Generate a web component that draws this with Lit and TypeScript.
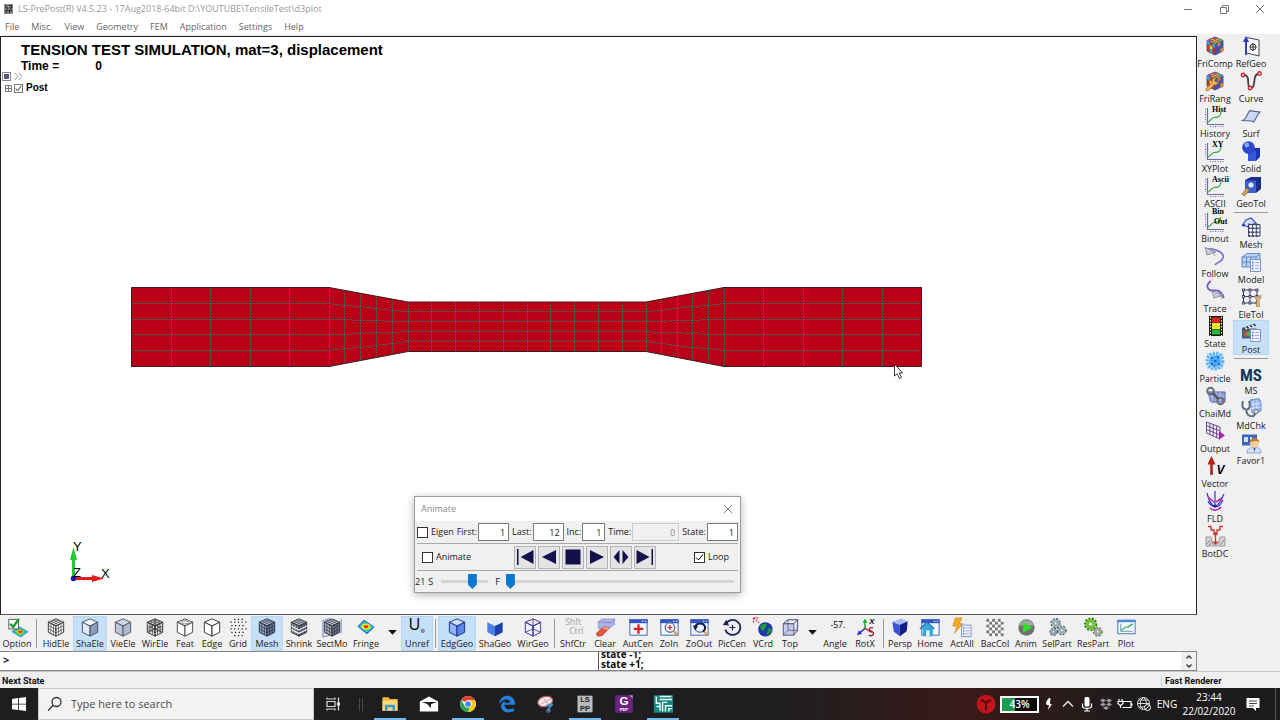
import { LitElement, html, svg, css, SVGTemplateResult, TemplateResult } from "lit";
import { customElement, property } from "lit/decorators.js";

type Pt = [number, number];
const mix = (a: Pt, b: Pt, t: number): Pt => [a[0] + (b[0] - a[0]) * t, a[1] + (b[1] - a[1]) * t];
const pts = (list: Pt[]) => list.map((p) => p.join(",")).join(" ");
const seg = (a: Pt, b: Pt) => `M${a[0]} ${a[1]}L${b[0]} ${b[1]}`;

/* Corners of the isometric cube used by most of the element icons. */
const T: Pt = [12, 3], L: Pt = [4, 6.5], R: Pt = [20, 6.5], C: Pt = [12, 10.5];
const LB: Pt = [4, 17], RB: Pt = [20, 17], B: Pt = [12, 21], K: Pt = [12, 13.5];

function ruled(face: Pt[], n: number): string {
  let d = "";
  for (let i = 1; i < n; i++) {
    const t = i / n;
    d += seg(mix(face[0], face[1], t), mix(face[3], face[2], t));
    d += seg(mix(face[0], face[3], t), mix(face[1], face[2], t));
  }
  return d;
}

function cube(top: string, left: string, right: string, line: string, n = 1, back = false): SVGTemplateResult {
  const faces: Pt[][] = [[T, R, C, L], [L, C, B, LB], [C, R, RB, B]];
  const fills = [top, left, right];
  return svg`
    ${faces.map((f, i) => svg`<polygon points=${pts(f)} fill=${fills[i]} stroke=${line} stroke-width=".9" stroke-linejoin="round"></polygon>`)}
    ${n > 1 ? svg`<path d=${faces.map((f) => ruled(f, n)).join("")} stroke=${line} stroke-width=".6" fill="none"></path>` : ""}
    ${back ? svg`<path d=${seg(T, K) + seg(K, LB) + seg(K, RB)} stroke=${line} stroke-width=".8" fill="none"></path>` : ""}`;
}

const plotIcon = (a: string, b = ""): SVGTemplateResult => svg`
  <path d="M4.500 4V20.500H21" fill="none" stroke="#6a6ab0" stroke-width="1.200"></path>
  <path d="M2.500 5v13M7 22.500h14" stroke="#6a6ab0" stroke-width="1" stroke-dasharray="1 1.500"></path>
  <path d="M5 18C8 17 8 14 11 13.500S17 14 18 8" fill="none" stroke="#27a844" stroke-width="1.200"></path>
  <text x="9" y=${b ? 5 : 7.5} class="glyph">${a}</text>
  ${b ? svg`<text x="11" y="15" class="glyph">${b}</text>` : ""}`;

const rubik = svg`
  ${cube("#f4c21f", "#d8362a", "#3a59d9", "#50505c", 3)}
  <path d="M4 6.500L6.700 7.800V11.300L4 10zM9.300 9.200L12 10.500V14L9.300 12.700zM6.700 14.800L9.300 16.100V19.600L6.700 18.300z" fill="#3aa5df"></path>
  <path d="M6.700 11.300L9.300 12.600V16.100L6.700 14.800z" fill="#f0d02e"></path>
  <path d="M14.700 9.200L17.300 7.800V11.300L14.700 12.700zM17.300 14.800L20 13.500V17L17.300 18.300z" fill="#ef7d22"></path>
  <path d="M12 14L14.700 12.700V16.200L12 17.500z" fill="#6040a0"></path>
  <path d="M12 3L14.700 4.200L12 5.500L9.300 4.200zM6.700 5.300L9.300 6.600L6.700 7.800L4 6.500z" fill="#b33bc0"></path>
  <path d="M17.300 5.300L20 6.500L17.300 7.800L14.700 6.600z" fill="#35b2a4"></path>`;

const wrench = svg`<path d="M3 19.500L9.500 13.500C8.500 10.500 11 8.500 13 9.200L11.500 11.500L13 13.300L15.500 12.300C15.500 15 13 16.500 11.200 15.800L5.500 21.500C4 22.500 2 21 3 19.500z" fill="#f2b65c" stroke="#a0661c" stroke-width=".8"></path>`;

const windowFrame = svg`
  <rect x="3.500" y="4" width="18" height="16" fill="#f4f7ff" stroke="#3f62b8"></rect>
  <rect x="3" y="3.500" width="19" height="4" fill="#2f56c4"></rect>
  <path d="M16 5.500h1.500M19 5.500h1.500" stroke="#fff" stroke-width="1.200"></path>`;

const gear = (x: number, y: number, r: number, color: string, edge: string): SVGTemplateResult => svg`
  <circle cx=${x} cy=${y} r=${r} fill="none" stroke=${edge} stroke-width=${r * 0.55} stroke-dasharray="2 1.300"></circle>
  <circle cx=${x} cy=${y} r=${r * 0.7} fill="none" stroke=${color} stroke-width=${r * 0.6}></circle>
  <circle cx=${x} cy=${y} r=${r * 0.35} fill="#fff" stroke=${edge} stroke-width=".5"></circle>`;

const notes = svg`
  <path d="M11.500 9.500h10v12h-10z" fill="#eef2ff" stroke="#7f8fd4"></path>
  <path d="M13 12.500h1.500M13 15.500h1.500M13 18.500h1.500" stroke="#5567c0" stroke-width="1.500"></path>
  <path d="M16 12.500h4M16 15.500h4M16 18.500h4" stroke="#9dabe8" stroke-width="1"></path>`;

const lens = svg`
  <circle cx="13" cy="12" r="5" fill="#eaf1ff" stroke="#6a7896" stroke-width="1.400"></circle>
  <path d="M17 15.500L20.500 20" stroke="#d79a3c" stroke-width="2.400"></path>`;

const ICONS: Record<string, SVGTemplateResult> = {
  Option: svg`
    <path d="M6 16.500L14 10.500L24 16.500L16 22.500z" fill="#2b9df0"></path><path d="M8.500 16.500L14.300 12.300L21.500 16.500L16 20.800z" fill="#43d84b"></path>
    <path d="M11 16.500L15 14L19.500 16.500L15.500 19.300z" fill="#f7e22c"></path><ellipse cx="15.500" cy="16.500" rx="2.600" ry="1.500" fill="#ef3322"></ellipse>
    <rect x="3.500" y="3.500" width="10" height="10" fill="#fff" stroke="#555"></rect>
    <path d="M5 8L8 11.500L14 3" fill="none" stroke="#159d2c" stroke-width="2.400"></path>`,
  HidEle: cube("#fff", "#fff", "#fff", "#222", 3),
  ShaEle: cube("#f2f6fd", "#dfe8f5", "#8c9cb8", "#3b4558"),
  VieEle: cube("#cfd6e6", "#bcc5d9", "#b0bad1", "#444a5a"),
  WirEle: svg`${cube("none", "none", "none", "#222", 3, true)}<path d="M4 13L12 9.500L20 13M8 5V15.500M16 5V15.500" stroke="#444" stroke-width=".6" fill="none"></path>`,
  Feat: svg`${cube("#fff", "#fff", "#fff", "#333")}<ellipse cx="12" cy="6.700" rx="4" ry="1.600" fill="none" stroke="#555" stroke-width=".8"></ellipse>`,
  Edge: cube("#fff", "#fff", "#fff", "#222"),
  Grid: svg`<path d="M4 6.500h17M5 10h15M4 13.500h17M5 17h15M8 3.500h10M8 20.500h9" stroke="#222" stroke-width="1.300" stroke-dasharray="1.300 2.600"></path>`,
  Mesh: cube("#c4cddd", "#96a3be", "#6b7896", "#1d2433", 3),
  Shrink: svg`${cube("#d2d6df", "#9a9fad", "#6b7080", "#23262e", 3)}<path d="M4 10.500L12 14.500L20 10.500M4 14L12 18L20 14" stroke="#fff" stroke-width="1.200" fill="none"></path>`,
  SectMo: svg`${cube("#d9dde6", "#aeb4c2", "#727a8c", "#22252d", 3)}<path d="M2.500 5V22M2.500 5L10 2.500M21.500 3V18M2.500 22L10 20" stroke="#6b7fc2" fill="none"></path>`,
  Fringe: svg`<path d="M3 11L10 4L21 11.500L13 19z" fill="#2d54e0"></path><path d="M4.500 11L10.300 5.200L19.500 11.500L13 17.500z" fill="#33cfd8"></path>
    <path d="M6 11L10.500 6.500L18 11.500L13 16z" fill="#3fdc3a"></path><ellipse cx="12" cy="11" rx="4.500" ry="3" fill="#f6ee2a"></ellipse><ellipse cx="12" cy="11" rx="2.600" ry="1.700" fill="#ec2a1c"></ellipse>`,
  Unref: svg`<text x="3" y="15" class="letter">U</text><circle cx="18" cy="15.500" r="1.800" fill="#bbb" stroke="#777"></circle><circle cx="18" cy="15.500" r=".7" fill="#333"></circle>`,
  EdgGeo: cube("#cfe0fd", "#8fb4f6", "#5a86e6", "#14207a"),
  ShaGeo: svg`<polygon points="12,3 20,6.500 12,10.500 4,6.500" fill="#e6eefc"></polygon><polygon points="4,6.500 12,10.500 12,21 4,17" fill="#4d7fe8"></polygon><polygon points="20,6.500 12,10.500 12,21 20,17" fill="#1d3fa8"></polygon>`,
  WirGeo: cube("none", "none", "none", "#2b2790", 1, true),
  ShfCtr: svg`<text x="4" y="9" class="ghost">Shft</text><text x="8" y="19" class="ghost">Ctrl</text>`,
  Clear: svg`<path d="M5 6L9 3H22L19 7H5zM5 6V13L11 16L22 9V3L19 7z" fill="#a9b4ea" stroke="#7681c6" stroke-width=".6"></path>
    <path d="M3 18L11 11L17 12L9 20.500L4 21z" fill="#e4573f" stroke="#a4331f" stroke-width=".7"></path><path d="M11 11L17 12L14.500 14.700L9 13z" fill="#f49a86"></path>`,
  AutCen: svg`${windowFrame}<path d="M12.500 8.500V18.500M7.500 13.500H17.500" stroke="#dd1d24" stroke-width="2.400"></path>`,
  ZoIn: svg`${windowFrame}${lens}<path d="M13 9.500V14.500M10.500 12H15.500" stroke="#dd1d24" stroke-width="1.300"></path>`,
  ZoOut: svg`${windowFrame}${lens}<path d="M8 12C9 7 17 6 18.500 12C18.500 14 17.500 15.500 16 16.500" fill="none" stroke="#111a48" stroke-width="2"></path><path d="M5.500 10L11 10.500L8 15z" fill="#111a48"></path>`,
  PicCen: svg`<path d="M5.500 8.500A8 7.800 0 1 1 5 14" fill="none" stroke="#20245c" stroke-width="1.800"></path><path d="M2.500 9.500L9 10L6 4z" fill="#20245c"></path><path d="M12.500 9V15M9.500 12H15.500" stroke="#20245c" stroke-width="1.200"></path>`,
  VCrd: svg`<circle cx="14.500" cy="14" r="7.500" fill="#1f36a8"></circle><path d="M9 11C11 8 14 7 16 8.500C15 10 16 12 13.500 13C14 15 11 16 10 14zM17 14C19 12 21 13 21 15C20 18 18 19 16 20C15 18 17 17 17 14z" fill="#1f9a38"></path>
    <path d="M2 2L9 8M2 2V8M2 2H7" stroke="#dc3a48" stroke-width="1.200" stroke-dasharray="2 1"></path>`,
  Top: svg`<path d="M5 8H16V20H5zM5 8L10 4H20L16 8M20 4V15L16 20" fill="#c9ccea" stroke="#44466a" stroke-width=".9"></path><path d="M5 8L10 4H20L16 8z" fill="#f2f3fb" stroke="#44466a" stroke-width=".9"></path><path d="M10 4V15H20M10 15L5 20" stroke="#44466a" stroke-width=".7" fill="none"></path>`,
  Angle: svg`<text x="15" y="13" class="angle">-57.</text>`,
  RotX: svg`<path d="M12 13V5" stroke="#1fa834" stroke-width="1.600"></path><path d="M9.500 7L12 2.500L14.500 7z" fill="#1fa834"></path><path d="M12 13L6 18" stroke="#2136c4" stroke-width="1.600"></path><path d="M3.500 20L5.500 15L9 18.500z" fill="#2136c4"></path>
    <path d="M12 13L19 17" stroke="#c9202c" stroke-width="1.600"></path><path d="M20.500 12.500C16 11 15 15 19 16C23 18 20 22 16 20" fill="none" stroke="#7d1720" stroke-width="1.300"></path><text x="16.500" y="8.500" class="axis">X</text>`,
  Persp: svg`<polygon points="4,6 13,2.500 20,5.500 11.500,9.500" fill="#a9bcf4"></polygon><polygon points="4,6 11.500,9.500 12,21 5.500,16.500" fill="#3c55d8"></polygon><polygon points="20,5.500 11.500,9.500 12,21 19,16" fill="#141f86"></polygon>`,
  Home: svg`${windowFrame}<path d="M3 13L9 7.500L15 13V21H4.500V13z" fill="#35a8dc"></path><path d="M1.500 13.500L9 6.500L16.500 13.500" fill="none" stroke="#1578b4" stroke-width="1.600"></path><rect x="8" y="15" width="3.500" height="6" fill="#e9f7ff"></rect>`,
  ActAll: svg`<path d="M5 2H12L9 8H13L4 18L7 10.500H2.500z" fill="#f6a91e" stroke="#c77b10" stroke-width=".6"></path>${notes}`,
  BacCol: svg`<rect x="3" y="3" width="18" height="18" fill="#fff"></rect>${[0, 1, 2, 3, 4, 5].map((r) => [0, 1, 2].map((c) => svg`<rect x=${3 + c * 6 + (r % 2) * 3} y=${3 + r * 3} width="3" height="3" fill="#777"></rect>`))}`,
  Anim: svg`<circle cx="12.500" cy="12" r="8.500" fill="#6c706f"></circle><path d="M4.500 10A8.500 8.500 0 0 1 20.500 10z" fill="#a2a6a5"></path><path d="M9 6.500L18.500 12L9 17.500z" fill="#2fe02a"></path>`,
  SelPart: svg`${gear(10.5, 7.5, 4.2, "#9db0b8", "#46555c")}${gear(17, 15, 4, "#9db0b8", "#46555c")}${gear(8.5, 16.5, 3.5, "#8ea3ac", "#46555c")}`,
  ResPart: svg`${gear(9.5, 8.5, 5.5, "#6cc22e", "#2d7a12")}${gear(17, 16.5, 4, "#9fb09a", "#4f6349")}`,
  Plot: svg`<rect x="3.500" y="4.500" width="18" height="14" fill="#f4fbff" stroke="#3a78c0"></rect><rect x="3" y="4" width="19" height="2.500" fill="#4c8ad2"></rect><path d="M6.500 8V16H19" stroke="#6786a8" stroke-width=".9" fill="none"></path><path d="M7 15C10 14 10 11 13 11.500S16 9 19 8.500" stroke="#21a049" stroke-width="1.200" fill="none"></path>`,

  FriComp: rubik,
  FriRang: svg`${rubik}${wrench}`,
  History: plotIcon("Hist"),
  XYPlot: plotIcon("XY"),
  ASCII: plotIcon("Ascii"),
  Binout: plotIcon("Bin", "Out"),
  Follow: svg`<path d="M4 5C10 4 22 8 20 14C19 18 14 18 12 21" fill="none" stroke="#8c74d4" stroke-width="1.800"></path><path d="M2 3.500L13 8L4 11zM8 4L12 12" fill="#c8ccd6" stroke="#7c8494" stroke-width=".8"></path>`,
  Trace: svg`<path d="M8 2C2 6 4 12 11 11.500S18 14 21 19" fill="none" stroke="#7258c4" stroke-width="1.800"></path><path d="M9 12L21 16L11 19zM15 12L19 20" fill="#c8ccd6" stroke="#7c8494" stroke-width=".8"></path>`,
  State: svg`<rect x="6" y="2" width="14" height="20" fill="#1c1a10"></rect><rect x="9" y="3.500" width="8" height="5" fill="#e5241d"></rect><rect x="9" y="9" width="8" height="6" fill="#f4e62a"></rect><rect x="9" y="15.500" width="8" height="5" fill="#23c136"></rect><path d="M7.500 3V22M18.500 3V22" stroke="#e9e3a8" stroke-width="1.200" stroke-dasharray="1.500 1.500"></path>`,
  Particle: svg`<rect x="4" y="4" width="16" height="16" fill="#bfe0fa"></rect><circle cx="12" cy="12" r="5.500" fill="#49a8ee"></circle><circle cx="12" cy="12" r="7.500" fill="none" stroke="#58b4f4" stroke-width="4" stroke-dasharray="2 1.300"></circle><path d="M8 9h1.500M14 8h2M11 12h2.500M15 15h2M8 15h2M11 17h1" stroke="#1a5ee0" stroke-width="1.800"></path>`,
  ChaiMd: svg`<path d="M5 8H22V18H8z" fill="#8d9ed8" stroke="#4f5f9a"></path><path d="M9 8V18M13 8V18M17 8V18M5 13H22" stroke="#c3ccf0" stroke-width=".8"></path><circle cx="7.500" cy="7" r="3.300" fill="none" stroke="#6a6f7c" stroke-width="2"></circle><circle cx="17.500" cy="17" r="3.300" fill="none" stroke="#6a6f7c" stroke-width="2"></circle><path d="M9.500 9L15.500 15" stroke="#555a66" stroke-width="2.600"></path>`,
  Output: svg`<path d="M3.500 3L17 8V20L3.500 14zM3.500 6.700L17 12M3.500 10.400L17 16M6.900 4.200V15.600M10.200 5.500V17.200M13.600 6.800V18.700" fill="none" stroke="#6a4a94" stroke-width="1"></path><path d="M16 12L22 16.500L16 20.500z" fill="#b01cb0"></path>`,
  Vector: svg`<path d="M8.500 21V9" stroke="#b3241e" stroke-width="2.600"></path><path d="M4.500 10.500L8.500 2L12.500 10.500z" fill="#b3241e"></path><text x="13.500" y="20" class="vee">V</text>`,
  FLD: svg`<path d="M4 4C6 12 9 17 12 17S18 12 21 5M5 12C8 18 15 22 20 11M12 2V18" fill="none" stroke="#3434c4" stroke-width="1.200"></path><path d="M5 8L11 13M19 9L13 13M7 19C10 22 15 22 18 18" stroke="#b42cb4" stroke-width="1.600" fill="none"></path><circle cx="12" cy="17" r="1.500" fill="#2222a8"></circle>`,
  BotDC: svg`<path d="M5 2.500H8V6H11V9H14V6H17V2.500H20" fill="none" stroke="#cc3430" stroke-width="1.300"></path><path d="M3 13H8L10 20H15L17 13H22V22H3z" fill="#d4d4d4" stroke="#888" stroke-width=".8"></path><path d="M4 20L7 16M6 22L9 18M17 21L21 16" stroke="#777" stroke-width=".8"></path><path d="M12.500 9V20M10.500 11L12.500 9L14.500 11M10.500 17.500L12.500 20L14.500 17.500" fill="none" stroke="#cc3430" stroke-width="1.300"></path>`,

  RefGeo: svg`<path d="M7.500 3.500L20 6V22L7.500 19z" fill="#fbfbff" stroke="#444" stroke-width="1"></path><path d="M7 21V6" stroke="#2338bc" stroke-width="1.800"></path><path d="M4 8L7 2L10 8z" fill="#2338bc"></path><circle cx="14" cy="13" r="3" fill="none" stroke="#333" stroke-width="1"></circle><path d="M14 9V17M10.500 13H17.500" stroke="#333" stroke-width="1"></path>`,
  Curve: svg`<path d="M4 6C13 5 6 19 12 19S12 5 20.500 4.500" fill="none" stroke="#4a3c3c" stroke-width="1.800"></path><g fill="#fff" stroke="#cc2430" stroke-width="1.500"><circle cx="4" cy="6" r="1.700"></circle><circle cx="11" cy="19" r="1.700"></circle><circle cx="20.500" cy="4.500" r="1.700"></circle></g>`,
  Surf: svg`<path d="M3.500 16.500C8 15 8 9 11 6.500C14 8 18 7 21 8C18 10 18 14 14.500 18C11 15.500 8 17.500 3.500 16.500z" fill="#ccd6f6" stroke="#56608c" stroke-width="1.100"></path>`,
  Solid: svg`<path d="M9 11.500L14 9H21V18L17 22H9z" fill="#1b33b4"></path><path d="M9 12H17V22H9z" fill="#3957dc"></path><circle cx="9.500" cy="8.500" r="6.300" fill="#2c48cc"></circle><circle cx="7.800" cy="6" r="2.400" fill="#8ea6f8"></circle>`,
  GeoTol: svg`<path d="M6 6L12 3H22V15L17 19H6z" fill="#1c2e8c"></path><path d="M6 6.500H17V19H6z" fill="#3c5ccf"></path><circle cx="12" cy="11" r="2.600" fill="#dfe8ff"></circle><path d="M3 20L8 14L10.500 16L5.500 22z" fill="#d9a05c" stroke="#8c5b22" stroke-width=".7"></path>`,
  "Mesh ": svg`<path d="M3.500 10L7 5L12 3L17 8L10 12z" fill="#d7defa" stroke="#3c50c8" stroke-width="1.200"></path><path d="M9.500 9.500H21V21H9.500zM13.300 9.500V21M17.200 9.500V21M9.500 13.300H21M9.500 17.200H21" fill="#fff" stroke="#3d4468" stroke-width="1"></path><path d="M9.500 9.500H21M9.500 13.300H21M9.500 17.200H21M9.500 21H21" stroke="#3d4468" stroke-width="2" stroke-dasharray="1.500 2.300"></path><circle cx="4.500" cy="10" r="1.500" fill="#2a3fc0"></circle>`,
  Model: svg`<path d="M3 7L8 3.500H21V13L17 17H3z" fill="#b7d0f4" stroke="#5b82c0" stroke-width=".9"></path><path d="M3 7H17V17M17 7L21 3.500M7.500 7V17M12 7V17M3 12H17" stroke="#5b82c0" stroke-width=".9" fill="none"></path>${notes}`,
  EleTol: svg`<path d="M4.500 5H18V18H4.500zM11 5V18M4.500 11.500H18" fill="none" stroke="#3b4068" stroke-width="1"></path><g fill="#fff" stroke="#22264c" stroke-width=".8">${[4.5, 11, 18].map((x) => [5, 11.5, 18].map((y) => svg`<rect x=${x - 1} y=${y - 1} width="2" height="2"></rect>`))}</g><path d="M16 10V13L18 14.500L17.500 21.500H20.500L20 14.500L22 13V10L20 12H18z" fill="#e6bc84" stroke="#976a2e" stroke-width=".6"></path>`,
  Post: svg`<path d="M3.500 9H17.500V18H3.500z" fill="#5a6478" stroke="#3a4254" stroke-width=".8"></path><path d="M3 8L16 3.500L16.800 6L4 10z" fill="#3e4556"></path><path d="M6 7.500L8 9M9.500 6L11.500 8M13 5L15 7" stroke="#fff" stroke-width="1.500"></path><rect x="5" y="12" width="3" height="3.500" fill="#e4432e"></rect><rect x="8" y="12" width="3" height="3.500" fill="#42c446"></rect>${notes}`,
  MS: svg`<text x="12" y="20" class="ms">MS</text>`,
  MdChk: svg`<path d="M11 4L20 2.500L22 6V15L13 17z" fill="#9db8ec" stroke="#5c7cc0" stroke-width=".8"></path><path d="M14 5V15M18 4.500V14M12 8.500L22 7M12 12.500L22 11" stroke="#dfe9ff" stroke-width=".8"></path><path d="M4 5C2 12 5 13.500 7.500 13.500S12 11 10 5M7.500 13.500C7 20 14 23 16.500 17" fill="none" stroke="#5e7088" stroke-width="2"></path><circle cx="17" cy="15.500" r="2.300" fill="#cdd9ea" stroke="#5e7088"></circle>`,
  Favor1: svg`<rect x="3" y="3.500" width="15" height="11" fill="#3c66b8"></rect><path d="M5 6h4v5h-4zM11 6h2v5h-2z" fill="#cfe0fa"></path><path d="M8 22C8 17 12 16.500 15.500 16.500S22 17 22 22z" fill="#d5e2f8" stroke="#7a92c4" stroke-width=".8"></path><circle cx="15.500" cy="12" r="4.600" fill="#f6cc98"></circle><path d="M10.800 11.500C10 6 20.500 5.500 20.300 11.500C18 9 14 10 10.800 11.500z" fill="#c07a2a"></path><path d="M14.500 17L15.500 21L16.500 17z" fill="#2d4fae"></path>`,
};

interface Tool { name: string; size?: string; on?: boolean; kind?: "sep" | "drop"; icon?: string }
const sep: Tool = { name: "", kind: "sep" };
const t = (name: string, size: string, on = false): Tool => ({ name, size, on });
const TOOLS: Tool[] = [
  t("Option", "w34"), sep, t("HidEle", "w34"), t("ShaEle", "w34", true), t("VieEle", "w32"), t("WirEle", "w32"), t("Feat", "w28"),
  t("Edge", "w26"), t("Grid", "w26"), t("Mesh", "w32", true), t("Shrink", "w32"), t("SectMo", "w34"), t("Fringe", "w34"),
  { name: "Fringe options", kind: "drop" }, t("Unref", "w32", true), sep, t("EdgGeo", "w38", true), t("ShaGeo", "w38"), t("WirGeo", "w38"), sep,
  t("ShfCtr", "w32"), t("Clear", "w32"), t("AutCen", "w34"), t("ZoIn", "w28"), t("ZoOut", "w32"), t("PicCen", "w34"), t("VCrd", "w28"),
  t("Top", "w26"), { name: "View options", kind: "drop" }, t("Angle", "w28"), t("RotX", "w32"), sep, t("Persp", "w28"), t("Home", "w32"),
  t("ActAll", "w32"), t("BacCol", "w34"), t("Anim", "w28"), t("SelPart", "w34"), t("ResPart", "w38"), t("Plot", "w28"),
];

const SIDE_A: Tool[] = ["FriComp", "FriRang", "History", "XYPlot", "ASCII", "Binout", "Follow", "Trace", "State", "Particle", "ChaiMd", "Output", "Vector", "FLD", "BotDC"].map((name) => ({ name }));
const SIDE_B: Tool[] = [
  { name: "RefGeo" }, { name: "Curve" }, { name: "Surf" }, { name: "Solid" }, { name: "GeoTol" }, sep,
  { name: "Mesh", icon: "Mesh " }, { name: "Model" }, { name: "EleTol" }, { name: "Post", on: true }, sep,
  { name: "MS" }, { name: "MdChk" }, { name: "Favor1" },
];

@customElement("tool-strip")
class ToolStrip extends LitElement {
  @property({ attribute: false }) tools: Tool[] = [];
  @property({ type: Boolean, reflect: true }) vertical = false;
  static styles = css`
    :host { display: flex; align-items: stretch; }
    :host([vertical]) { flex-direction: column; width: 36px; }
    button { border: 0; margin: 0; padding: 0; background: none; color: #1a1a1a; font: 9px/9px "Open Sans", "Noto Sans", sans-serif;
      display: flex; flex-direction: column; align-items: center; height: 35px; flex: none; white-space: nowrap; }
    :host([vertical]) button { line-height: 11px; }
    button.on { background: #c5e0f7; box-shadow: inset 0 0 0 1px #b3d6f3; }
    svg { display: block; width: 24px; height: 23px; flex: none; overflow: visible; }
    :host([vertical]) svg { height: 24px; }
    .sep { width: 5px; display: flex; justify-content: center; flex: none; }
    .sep::before { content: ""; width: 1px; margin: 3px 0; background: #9a9a9a; }
    :host([vertical]) .sep { width: auto; height: 6px; align-items: center; }
    :host([vertical]) .sep::before { width: 34px; height: 1px; margin: 0; }
    .drop { width: 18px; }
    .w26 { width: 26px; } .w28 { width: 28px; } .w32 { width: 32px; } .w34 { width: 34px; } .w38 { width: 38px; }
    .glyph { font: bold 8px "Liberation Serif", serif; }
    .letter { font: 17px "Open Sans", sans-serif; }
    .ghost { font: 9px "Open Sans", sans-serif; fill: #a3a3a3; }
    .angle { font: 9px "Open Sans", sans-serif; text-anchor: middle; }
    .axis { font: italic bold 8px "Liberation Sans", sans-serif; }
    .vee { font: italic bold 12px "Liberation Sans", sans-serif; }
    .ms { font: bold 17px "Liberation Sans Narrow", "Roboto Condensed", "Roboto", sans-serif; fill: #15395e; text-anchor: middle; }
  `;
  render() {
    return this.tools.map((tool) => {
      if (tool.kind === "sep") return html`<span class="sep"></span>`;
      if (tool.kind === "drop") return html`<button class="drop" aria-label=${tool.name}><svg viewBox="0 0 24 24"><path d="M8 14.500h9l-4.500 5z" fill="#111"></path></svg></button>`;
      return html`<button class="${tool.size ?? ""} ${tool.on ? "on" : ""}"><svg viewBox="0 0 24 24" aria-hidden="true">${ICONS[tool.icon ?? tool.name]}</svg>${tool.name}</button>`;
    });
  }
}

@customElement("animate-dialog")
class AnimateDialog extends LitElement {
  static styles = css`
    :host { display: block; width: 327px; background: #f0f0f0; border: 1px solid #9c9c9c; box-shadow: 0 2px 8px rgba(0, 0, 0, .3);
      font: 9px/12px "Open Sans", "Noto Sans", sans-serif; color: #222; box-sizing: border-box; }
    * { box-sizing: border-box; }
    header { display: flex; justify-content: space-between; align-items: center; height: 24px; padding: 0 7px 0 6px; background: #fff; color: #8a8a8a; font-size: 9px; }
    header button { border: 0; background: none; padding: 0; width: 10px; height: 10px; }
    header svg { display: block; }
    .row { display: flex; align-items: center; border-bottom: 1px solid #a8a8a8; }
    .fields { height: 23px; justify-content: space-between; margin: 0 2px; }
    .play { height: 27px; margin: 0 2px; padding: 0 9px 0 5px; }
    .speed { height: 21px; border: 0; padding: 0 6px 0 0; gap: 3px; }
    label { display: flex; align-items: center; gap: 1px; white-space: nowrap; }
    .check { gap: 3px; }
    input[type="checkbox"] { appearance: none; margin: 0; width: 11px; height: 11px; border: 1px solid #333; background: #fff; flex: none; }
    input[type="checkbox"]:checked { background: #fff url('data:image/svg+xml,<svg xmlns="http://www.w3.org/2000/svg" viewBox="0 0 9 9"><path d="M1 4.500L3.500 7L8 1.500" fill="none" stroke="black"/></svg>'); }
    input[type="text"] { width: 31px; height: 18px; margin: 0; padding: 0 3px; border: 1px solid #7a7a7a; background: #fff; font: inherit; color: inherit; text-align: right; }
    input[type="text"].small { width: 23px; } input[type="text"].wide { width: 47px; }
    input[type="text"]:disabled { background: #f0f0f0; border-color: #ccc; color: #8a8a8a; }
    .toggle { width: 92px; }
    .keys { display: flex; gap: 2px; flex: 1; }
    .keys button { width: 22px; height: 23px; padding: 0; border: 1px solid #b4b4b4; background: #e4e4e4; }
    .keys svg { display: block; width: 20px; height: 20px; fill: #14104c; }
    input[type="range"] { appearance: none; margin: 0; height: 16px; background: linear-gradient(#d4d4d4, #d4d4d4) center / 100% 3px no-repeat; }
    input[type="range"]::-webkit-slider-thumb { appearance: none; width: 9px; height: 15px; background: #0b78d4; clip-path: polygon(0 0, 100% 0, 100% 70%, 50% 100%, 0 70%); }
    input[type="range"].slow { width: 47px; margin: 0 4px 0 5px; }
    input[type="range"].frame { flex: 1; min-width: 0; margin-left: 3px; }
  `;
  render() {
    const key = (name: string, d: string) => html`<button aria-label=${name}><svg viewBox="0 0 20 20"><path d=${d}></path></svg></button>`;
    const field = (name: string, value: string, cls = "", off = false) => html`<label>${name}<input type="text" class=${cls} .value=${value} ?disabled=${off}></label>`;
    return html`
      <header><span>Animate</span><button aria-label="Close"><svg width="10" height="10" viewBox="0 0 10 10"><path d="M1 1L9 9M9 1L1 9" stroke="#777" fill="none"></path></svg></button></header>
      <div class="row fields">
        <label class="check"><input type="checkbox">Eigen</label>
        ${field("First:", "1")}${field("Last:", "12")}${field("Inc:", "1", "small")}${field("Time:", "0", "wide", true)}${field("State:", "1")}
      </div>
      <div class="row play">
        <label class="check toggle"><input type="checkbox">Animate</label>
        <div class="keys">
          ${key("First state", "M2 2h1.500v16H2zM18.500 3v14L5.500 10z")}
          ${key("Play backward", "M17 3v14L3 10z")}
          ${key("Stop", "M2.500 2.500h15v15h-15z")}
          ${key("Play forward", "M3 3v14L17 10z")}
          ${key("Step", "M8.500 3v14L2.500 10zM11.500 3v14L17.500 10z")}
          ${key("Last state", "M16.500 2H18v16h-1.500zM1.500 3v14L14.500 10z")}
        </div>
        <label class="check"><input type="checkbox" checked>Loop</label>
      </div>
      <div class="row speed">
        <span>21</span><label for="slow">S</label><input id="slow" class="slow" type="range" min="0" max="100" .value=${"70"}>
        <label for="frame">F</label><input id="frame" class="frame" type="range" min="1" max="12" .value=${"1"}>
      </div>`;
  }
}

/* Stations along the specimen: x, upper edge, lower edge. */
const STATIONS: [number, number, number][] = [];
for (let i = 0; i < 5; i++) STATIONS.push([131.5 + i * 39.5, 287.5, 366.5]);
for (let i = 0; i < 5; i++) STATIONS.push([329 + i * 15.8, 287.5 + i * 2.9, 366.5 - i * 3]);
for (let i = 0; i < 10; i++) STATIONS.push([408 + i * 23.8, 302, 351.5]);
for (let i = 0; i < 5; i++) STATIONS.push([646 + i * 15.6, 302 - i * 2.9, 351.5 + i * 3]);
for (let i = 0; i < 6; i++) STATIONS.push([724 + i * 39.5, 287.5, 366.5]);

function specimen(): SVGTemplateResult {
  const outline = [...STATIONS.map((s) => `${s[0]},${s[1]}`), ...[...STATIONS].reverse().map((s) => `${s[0]},${s[2]}`)].join(" ");
  const verticals = STATIONS.map((s) => `M${Math.floor(s[0]) + 0.5} ${s[1]}V${s[2]}`).join("");
  const rows = [1, 2, 3, 4].map((k) => "M" + STATIONS.map((s) => {
    const y = s[1] + ((s[2] - s[1]) * k) / 5;
    return `${s[0]} ${Math.floor(y) + 0.5}`;
  }).join("L")).join("");
  return svg`
    <polygon points=${outline} fill="#ba0018"></polygon>
    <g fill="none" stroke="#5e4a46" stroke-width="1" shape-rendering="crispEdges"><path d=${verticals}></path><path d=${rows}></path></g>
    <polygon points=${outline} fill="none" stroke="#3c1c1c" stroke-width="1"></polygon>`;
}

const TASKS: { name: string; open?: boolean; icon: SVGTemplateResult }[] = [
  { name: "File Explorer", open: true, icon: svg`<path d="M3 4h7l2 2h9v14H3z" fill="#f0bb3c"></path><path d="M3 8h18v12H3z" fill="#fbd975"></path><path d="M6 13h12v7h-3v-4H9v4H6z" fill="#3d97d6"></path>` },
  { name: "Mail", icon: svg`<path d="M1 9L12 3L23 9V21H1z" fill="#fff"></path><path d="M3 9.500H21.500L12.500 13z" fill="#1f1f20"></path><path d="M10 12L14 17L14.500 12z" fill="#1f1f20"></path>` },
  { name: "Chrome", open: true, icon: svg`<circle cx="12" cy="12" r="9.500" fill="#fff"></circle><path d="M12 12L3.800 7.200A9.500 9.500 0 0 1 20.200 7.200z" fill="#e2402f"></path><path d="M3.800 7.200A9.500 9.500 0 0 0 12 21.500L15.500 14L8 14z" fill="#2da44e"></path><path d="M20.200 7.200A9.500 9.500 0 0 1 12 21.500L16 13L12 7.200z" fill="#fbc916"></path><circle cx="12" cy="12" r="4.400" fill="#fff"></circle><circle cx="12" cy="12" r="3.400" fill="#4285f0"></circle>` },
  { name: "Edge", icon: svg`<path d="M2.500 12C4 -2 22.500 -.5 21.500 13H9C9 19 16 19.500 20.500 17V20.500C12 24.500 3.500 20.500 5 13C6 10 8 8.500 10 8C9 9 9 9.500 9 10.500H15.500C16 5 7 5 2.500 12z" fill="#2380d8"></path>` },
  { name: "Snipping Tool", icon: svg`<ellipse cx="11" cy="9" rx="9" ry="6" fill="#f1e9ea" stroke="#bd5962" stroke-width="1.500" transform="rotate(-15 11 9)"></ellipse><path d="M6 12L18 6M9 5L15 12" stroke="#d58b92"></path><path d="M12 14L18 12L14 20M17 16L20 12" fill="none" stroke="#4a90c4" stroke-width="1.800"></path><circle cx="15" cy="20" r="1.800" fill="none" stroke="#4a90c4" stroke-width="1.500"></circle>` },
  { name: "LS-PrePost", open: true, icon: svg`<rect x="3" y="2" width="18" height="20" fill="#b9bbbd"></rect><text x="12" y="10" class="lspp">LS</text><text x="12" y="20.500" class="lspp">PP</text>` },
  { name: "GeForce", icon: svg`<rect x="1.500" y="1.500" width="21" height="21" fill="#6d2481"></rect><path d="M18 1.500h4.500v4z" fill="#b58ac2"></path><text x="12" y="13" class="gee">G</text><text x="12" y="20.500" class="pep">PEP</text>` },
  { name: "Simulation Suite", open: true, icon: svg`<rect x="1" y="1.500" width="23" height="21" fill="#17877e"></rect><path d="M4 3V11H8.500V20M11.500 21V10H17M8 6.500H23M8 3H22M4 15H8M15 21V14H23M19 21V17.500H23" fill="none" stroke="#e9fffb" stroke-width="1.700"></path>` },
];

@customElement("task-bar")
class TaskBar extends LitElement {
  static styles = css`
    :host { display: flex; align-items: stretch; height: 32px; color: #fff; font: 10px/16px "Open Sans", "Noto Sans", sans-serif;
      background: linear-gradient(90deg, #1e1e20 0 60%, #3a1a18 76%, #1d1b1c 88%); }
    * { box-sizing: border-box; }
    button { border: 0; padding: 0; margin: 0; background: none; color: inherit; font: inherit; display: flex; align-items: center; justify-content: center; flex: none; }
    svg { display: block; width: 20px; height: 20px; }
    .start { width: 38px; } .view { width: 38px; } .task { width: 39px; }
    .search { display: flex; align-items: center; gap: 6px; width: 276px; padding: 0 6px; background: #f2f2f2; border: 1px solid #c8c8c8; color: #444; }
    .search input { flex: 1; min-width: 0; border: 0; padding: 0; background: none; font: 11px/18px "Open Sans", "Noto Sans", sans-serif; color: #444; }
    .search input::placeholder { color: #4a4a4a; opacity: 1; }
    .bar { width: 18px; display: flex; align-items: center; justify-content: center; gap: 2px; }
    .bar::before, .bar::after { content: ""; width: 1px; height: 13px; background: #4c4c4e; }
    .task.open { background: linear-gradient(#76b9ed, #76b9ed) center bottom / 32px 2px no-repeat; }
    .tray { display: flex; align-items: center; margin-left: auto; }
    .tray button { width: 19px; height: 32px; }
    .tray svg { width: 16px; height: 16px; }
    .tray .red { width: 28px; } .tray .red svg { width: 20px; height: 20px; }
    .battery { width: 39px; height: 17px; border: 2px solid #fff; background: linear-gradient(90deg, #1e9c50 0 38%, #0a0a0a 38%); display: flex; align-items: center; justify-content: center; font-size: 10px; font-weight: 600; }
    .tray .lang { width: 28px; } .tray .clock { width: 56px; flex-direction: column; line-height: 14px; }
    .tray .note { width: 32px; } .tray .clock span { white-space: nowrap; }
    .edge { width: 5px; height: 32px; border-left: 1px solid #555; margin-left: 6px; }
    .lspp { font: bold 9px "Liberation Sans", sans-serif; text-anchor: middle; fill: #222; }
    .gee { font: bold 14px "Liberation Sans", sans-serif; text-anchor: middle; fill: #fff; }
    .pep { font: bold 5px "Liberation Sans", sans-serif; text-anchor: middle; fill: #fff; }
  `;
  render() {
    const tray = (name: string, g: SVGTemplateResult, cls = ""): TemplateResult => html`<button class=${cls} aria-label=${name}><svg viewBox="0 0 16 16">${g}</svg></button>`;
    return html`
      <button class="start" aria-label="Start"><svg viewBox="0 0 20 20" fill="#fff"><path d="M3 5l6-.9V9.700H3zM9.800 4L17 3V9.700H9.800zM3 10.500H9V16L3 15.200zM9.800 10.500H17V17L9.800 16z"></path></svg></button>
      <label class="search"><svg viewBox="0 0 20 20" fill="none" stroke="#333" stroke-width="1.300"><circle cx="11.500" cy="8" r="4.500"></circle><path d="M8.300 11.300L3 16.500"></path></svg><input type="search" placeholder="Type here to search" aria-label="Search"></label>
      <button class="view" aria-label="Task view"><svg viewBox="0 0 20 20" fill="none" stroke="#ddd" stroke-width="1.200"><path d="M4 7.500h8v5H4zM4 3.500V5h8V3.500M4 16.500V15h8v1.500M15.500 3.500V16.500"></path><path d="M14.500 9h2v2h-2z" fill="#fff"></path></svg></button>
      <span class="bar"></span>
      ${TASKS.map((k) => html`<button class="task ${k.open ? "open" : ""}" aria-label=${k.name}><svg viewBox="0 0 24 24">${k.icon}</svg></button>`)}
      <div class="tray">
        ${tray("Recorder", svg`<circle cx="8" cy="8" r="7.500" fill="#c4141c"></circle><path d="M4 4.500L8 7L12 4.500M8 7V13" stroke="#5a0a0e" stroke-width="1.800" fill="none"></path>`, "red")}
        <span class="battery">43%</span>
        ${tray("Charging", svg`<path d="M8 2C4 6 5 8 6 9H8L7 14L11 8H9L9.500 2z" fill="#fff"></path>`)}
        ${tray("Show hidden icons", svg`<path d="M3 10.500L8 5.500L13 10.500" fill="none" stroke="#eee" stroke-width="1.300"></path>`)}
        ${tray("Microphone", svg`<rect x="5.500" y="1" width="5" height="9.500" rx="1.500" fill="#fff"></rect><path d="M3.500 7.500V10.500C3.500 13 12.500 13 12.500 10.500V7.500M8 12.500V15M5 15H11" stroke="#fff" stroke-width="1.200" fill="none"></path>`)}
        ${tray("Dropbox", svg`<path d="M5 2.500L8 4.500L5 6.500L2 4.500zM11 2.500L14 4.500L11 6.500L8 4.500zM5 6.500L8 8.500L5 10.500L2 8.500zM11 6.500L14 8.500L11 10.500L8 8.500zM8 10L11 12L8 14L5 12z" fill="#999"></path>`)}
        ${tray("Power", svg`<path d="M6.500 5.500H14V11.500H5.500M15 7.500V9.500M2 3V5.500M5 3V5.500M1 5.500H6V7.500L4.500 9H2.500L1 7.500zM3.500 9V12" stroke="#fff" stroke-width="1.200" fill="none"></path>`)}
        ${tray("Network", svg`<circle cx="7.500" cy="7.500" r="6" fill="none" stroke="#ddd"></circle><path d="M1.500 7.500H13.500M3 4H12M3 11H9M7.500 1.500C3 5 3 10 7.500 13.500M7.500 1.500C10 4 11 6 10.500 8" fill="none" stroke="#ddd"></path><circle cx="11.500" cy="11.500" r="3" fill="#1d1b1c" stroke="#fff"></circle><path d="M9.500 13.500L13.500 9.500" stroke="#fff"></path>`)}
        <button class="lang">ENG</button>
        <button class="clock"><span>23:44</span><span>22/02/2020</span></button>
        ${tray("Notifications", svg`<path d="M1.500 2H14.500V12H11V15L8 12H1.500z" fill="#fff"></path><path d="M4 5H12M4 7.500H12M4 10H9" stroke="#333" stroke-width=".9"></path>`, "note")}
        <span class="edge"></span>
      </div>`;
  }
}

@customElement("app-root")
class AppRoot extends LitElement {
  static styles = css`
    :host { display: flex; flex-direction: column; height: 100vh; overflow: hidden; background: #f0f0f0; color: #111;
      font: 9px/12px "Open Sans", "Noto Sans", sans-serif; }
    * { box-sizing: border-box; }
    .title { display: flex; align-items: center; height: 18px; padding: 0 14px 0 4px; gap: 5px; background: #fff; color: #999; font-size: 9px; }
    .title svg { display: block; flex: none; }
    .title .name { flex: 1; }
    .title button { border: 0; padding: 0; background: none; width: 12px; height: 12px; }
    .controls { display: flex; gap: 24px; }
    nav { display: flex; height: 16px; flex: none; align-items: center; gap: 12px; padding: 1px 5px 0; background: #fff; color: #666; }
    nav a { color: inherit; text-decoration: none; }
    .work { flex: 1; display: flex; min-height: 0; }
    .main { flex: 1; min-width: 0; display: flex; flex-direction: column; }
    .view { position: relative; flex: 1; min-height: 0; border: 1px solid #222; border-bottom-color: #555; margin-top: 2px; background: #fff; font-family: "Liberation Sans", Arial, sans-serif; font-weight: bold; color: #000; }
    .scene { position: absolute; inset: 0; width: 100%; height: 100%; display: block; }
    .scene text { font: 13px "Liberation Sans", sans-serif; }
    .caption { position: relative; padding: 4px 20px 0; }
    h1 { margin: 0; font-size: 15px; line-height: 18px; }
    .time { display: flex; gap: 36px; font-size: 12px; line-height: 14px; }
    .tree { position: relative; padding: 0 1px; font-size: 10px; }
    .tree div { display: flex; align-items: center; gap: 1px; height: 12px; line-height: 12px; }
    .tree div:first-child { height: 8px; }
    .tree div + div { padding-left: 2px; margin-top: 1px; }
    .tree svg { display: block; }
    .tree label { display: flex; align-items: center; gap: 3px; }
    .tree input { appearance: none; width: 9px; height: 9px; margin: 0; border: 1px solid #777; background: url('data:image/svg+xml,<svg xmlns="http://www.w3.org/2000/svg" viewBox="0 0 9 9"><path d="M1 4.500L3.500 7.500L8 1" fill="none" stroke="black"/></svg>'); }
    animate-dialog { position: absolute; left: 413px; top: 459px; }
    .tools { flex: none; padding-top: 1px; }
    .command { display: grid; grid-template-columns: 1fr 1fr; height: 20px; flex: none; background: #fff; border: 1px solid #888; border-width: 1px 1px 1px 0; }
    .command label { display: flex; min-width: 0; padding: 0 3px; gap: 4px; font-weight: bold; font-size: 11px; line-height: 15px; }
    .command input { flex: 1; min-width: 0; border: 0; padding: 0; font: inherit; outline: 0; }
    .log { display: flex; min-width: 0; min-height: 0; border-left: 1px solid #555; }
    .log output { flex: 1; display: flex; flex-direction: column; justify-content: flex-end; overflow: hidden; padding: 0 2px 1px; font: bold 10px/10px "Open Sans", sans-serif; }
    .log output span { flex: none; }
    .scroll { display: flex; flex-direction: column; width: 15px; background: #f0f0f0; }
    .scroll button { flex: 1; min-height: 0; border: 0; padding: 0; background: none; display: flex; align-items: center; justify-content: center; }
    .side { display: flex; flex: none; width: 83px; background: #f0f0f0; }
    .status { display: flex; height: 17px; flex: none; align-items: center; border-top: 1px solid #c4c4c4; padding: 1px 2px 0; font: bold 9px/12px "Roboto", "Open Sans", sans-serif; }
    .status span:first-child { flex: 1; }
    .status span + span { width: 117px; padding-left: 3px; border-left: 1px solid #d4d4d4; }
  `;
  render() {
    return html`
      <header class="title">
        <svg width="9" height="10" viewBox="0 0 9 10"><path d="M0 0h9v10H0z" fill="#888"></path><path d="M2 1V4H4M5 1.500H7.500V4H5M2 9V6H4V7.500M5.500 9V6H7.500V7.500" stroke="#222" fill="none"></path></svg>
        <span class="name">LS-PrePost(R) V4.5.23 - 17Aug2018-64bit D:\\YOUTUBE\\TensileTest\\d3plot</span>
        <div class="controls">
          <button aria-label="Minimize"><svg width="12" height="12" viewBox="0 0 12 12"><path d="M2 6.500h8" stroke="#777"></path></svg></button>
          <button aria-label="Restore"><svg width="12" height="12" viewBox="0 0 12 12"><path d="M2.500 4.500h6v6h-6zM4.500 4V2.500h6v6H9" stroke="#777" fill="none"></path></svg></button>
          <button aria-label="Close"><svg width="12" height="12" viewBox="0 0 12 12"><path d="M2 2l8 8M10 2l-8 8" stroke="#777"></path></svg></button>
        </div>
      </header>
      <nav>${["File", "Misc.", "View", "Geometry", "FEM", "Application", "Settings", "Help"].map((m) => html`<a href="#">${m}</a>`)}</nav>
      <div class="work">
        <div class="main">
          <section class="view">
            <svg class="scene" viewBox="1 37 1195 577" preserveAspectRatio="xMinYMin meet">
              ${specimen()}
              <path d="M73.500 578V558" stroke="#22c832" stroke-width="3"></path><path d="M70 560L73.500 547L77 560z" fill="#22c832"></path>
              <path d="M74 578.500H93" stroke="#e01c1c" stroke-width="3"></path><path d="M92 575L104 578.500L92 582z" fill="#e01c1c"></path>
              <circle cx="73.500" cy="578.500" r="2.800" fill="#1a1ab0"></circle>
              <text x="73" y="551">Y</text><text x="101" y="578">X</text><text x="73" y="577">Z</text>
              <path d="M894.500 364V376L897 373.800L899.500 378.500L901.500 377.500L899.200 373H902.500z" fill="#fff" stroke="#222" stroke-width=".9"></path>
            </svg>
            <div class="caption">
              <h1>TENSION TEST SIMULATION, mat=3, displacement</h1>
              <div class="time"><span>Time =</span><span>0</span></div>
            </div>
            <div class="tree">
              <div><svg width="20" height="10" viewBox="0 0 20 10"><rect x=".5" y=".5" width="8" height="8" fill="#fff" stroke="#888"></rect><rect x="2" y="2" width="5" height="5" fill="#558"></rect><path d="M13 1L16 4.500L13 8M17 1L20 4.500L17 8" fill="none" stroke="#999"></path></svg></div>
              <div><svg width="9" height="9" viewBox="0 0 9 9"><path d="M1.500 1.500h6v6h-6zM4.500 1.500v6M1.500 4.500h6" fill="none" stroke="#777"></path></svg><label><input type="checkbox" checked>Post</label></div>
            </div>
            <animate-dialog></animate-dialog>
          </section>
          <tool-strip class="tools" .tools=${TOOLS}></tool-strip>
          <div class="command">
            <label>&gt;<input type="text" aria-label="Command"></label>
            <div class="log">
              <output><span>state -1;</span><span>state +1;</span></output>
              <div class="scroll">
                <button aria-label="Scroll up"><svg width="8" height="6" viewBox="0 0 8 6"><path d="M1.500 4.500L4 2L6.500 4.500" fill="none" stroke="#333" stroke-width="1.300"></path></svg></button>
                <button aria-label="Scroll down"><svg width="8" height="6" viewBox="0 0 8 6"><path d="M1.500 1.500L4 4L6.500 1.500" fill="none" stroke="#333" stroke-width="1.300"></path></svg></button>
              </div>
            </div>
          </div>
        </div>
        <aside class="side"><tool-strip vertical .tools=${SIDE_A}></tool-strip><tool-strip vertical .tools=${SIDE_B}></tool-strip></aside>
      </div>
      <footer class="status"><span>Next State</span><span>Fast Renderer</span></footer>
      <task-bar></task-bar>`;
  }
}
